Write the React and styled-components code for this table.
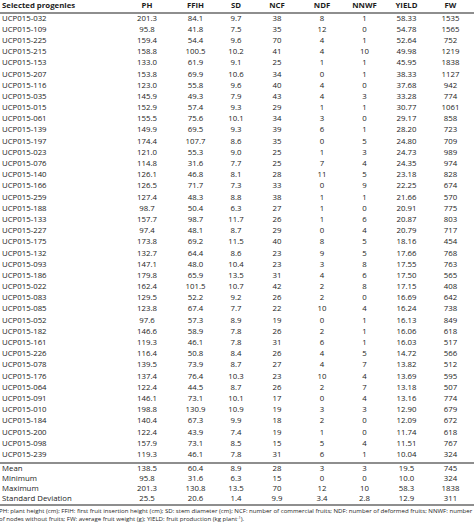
import React from "react";
import styled, { createGlobalStyle } from "styled-components";

const GlobalStyle = createGlobalStyle`
  html, body {
    margin: 0;
    padding: 0;
    background: #ffffff;
  }
  body {
    font-family: "Open Sans", "Noto Sans", sans-serif;
    color: #1c1c1c;
  }
`;

const cols = "122px 50px 47px 34px 48px 42px 43px 41px 47px";

const Sheet = styled.div`
  width: 474px;
  height: 525px;
  overflow: hidden;
  font-size: 7.8px;
`;

const Row = styled.div`
  display: grid;
  grid-template-columns: ${cols};
  align-items: center;
  box-sizing: border-box;
  height: ${(p) => p.$h}px;
  padding-bottom: ${(p) => p.$pb || 0}px;
  line-height: 7px;
  white-space: nowrap;
`;

const HeadRow = styled(Row)`
  font-weight: 700;
  border-bottom: 2px solid #8e8e8e;
`;

const StatBlock = styled.div`
  border-top: 2px solid #8e8e8e;
  border-bottom: 2px solid #8e8e8e;
`;

const Label = styled.div`
  padding-left: 2px;
`;

const Cell = styled.div`
  text-align: center;
`;

const Notes = styled.div`
  width: 474px;
  overflow: hidden;
  padding-top: 1px;
`;

const Note = styled.div`
  font-size: 6.1px;
  line-height: 8.5px;
  margin-left: -1px;
  white-space: nowrap;
  color: #262626;
`;

const Sup = styled.sup`
  font-size: 4px;
  line-height: 0;
  vertical-align: 2px;
`;

const headers = ["PH", "FFIH", "SD", "NCF", "NDF", "NNWF", "YIELD", "FW"];

const rows = [
  ["032", "201.3", "84.1", "9.7", "38", "8", "1", "58.33", "1535"],
  ["109", "95.8", "41.8", "7.5", "35", "12", "0", "54.78", "1565"],
  ["225", "159.4", "54.4", "9.6", "70", "4", "1", "52.64", "752"],
  ["215", "158.8", "100.5", "10.2", "41", "4", "10", "49.98", "1219"],
  ["153", "133.0", "61.9", "9.1", "25", "1", "1", "45.95", "1838"],
  ["207", "153.8", "69.9", "10.6", "34", "0", "1", "38.33", "1127"],
  ["116", "123.0", "55.8", "9.6", "40", "4", "0", "37.68", "942"],
  ["035", "145.9", "49.3", "7.9", "43", "4", "3", "33.28", "774"],
  ["015", "152.9", "57.4", "9.3", "29", "1", "1", "30.77", "1061"],
  ["061", "155.5", "75.6", "10.1", "34", "3", "0", "29.17", "858"],
  ["139", "149.9", "69.5", "9.3", "39", "6", "1", "28.20", "723"],
  ["197", "174.4", "107.7", "8.6", "35", "0", "5", "24.80", "709"],
  ["023", "121.0", "55.3", "9.0", "25", "1", "3", "24.73", "989"],
  ["076", "114.8", "31.6", "7.7", "25", "7", "4", "24.35", "974"],
  ["140", "126.1", "46.8", "8.1", "28", "11", "5", "23.18", "828"],
  ["166", "126.5", "71.7", "7.3", "33", "0", "9", "22.25", "674"],
  ["259", "127.4", "48.3", "8.8", "38", "1", "1", "21.66", "570"],
  ["188", "98.7", "50.4", "6.3", "27", "1", "0", "20.91", "775"],
  ["133", "157.7", "98.7", "11.7", "26", "1", "6", "20.87", "803"],
  ["227", "97.4", "48.1", "8.7", "29", "0", "4", "20.79", "717"],
  ["175", "173.8", "69.2", "11.5", "40", "8", "5", "18.16", "454"],
  ["132", "132.7", "64.4", "8.6", "23", "9", "5", "17.66", "768"],
  ["093", "147.1", "48.0", "10.4", "23", "3", "8", "17.55", "763"],
  ["186", "179.8", "65.9", "13.5", "31", "4", "6", "17.50", "565"],
  ["022", "162.4", "101.5", "10.7", "42", "2", "8", "17.15", "408"],
  ["083", "129.5", "52.2", "9.2", "26", "2", "0", "16.69", "642"],
  ["085", "123.8", "67.4", "7.7", "22", "10", "4", "16.24", "738"],
  ["052", "97.6", "57.3", "8.9", "19", "0", "1", "16.13", "849"],
  ["182", "146.6", "58.9", "7.8", "26", "2", "1", "16.06", "618"],
  ["161", "119.3", "46.1", "7.8", "31", "6", "1", "16.03", "517"],
  ["226", "116.4", "50.8", "8.4", "26", "4", "5", "14.72", "566"],
  ["078", "139.5", "73.9", "8.7", "27", "4", "7", "13.82", "512"],
  ["176", "137.4", "76.4", "10.3", "23", "10", "4", "13.69", "595"],
  ["064", "122.4", "44.5", "8.7", "26", "2", "7", "13.18", "507"],
  ["091", "146.1", "73.1", "10.1", "17", "0", "4", "13.16", "774"],
  ["010", "198.8", "130.9", "10.9", "19", "3", "3", "12.90", "679"],
  ["184", "140.4", "67.3", "9.9", "18", "2", "0", "12.09", "672"],
  ["200", "122.4", "43.9", "7.4", "19", "1", "0", "11.74", "618"],
  ["098", "157.9", "73.1", "8.5", "15", "5", "4", "11.51", "767"],
  ["239", "119.3", "46.1", "7.8", "31", "6", "1", "10.04", "324"],
];

const stats = [
  ["Mean", "138.5", "60.4", "8.9", "28", "3", "3", "19.5", "745"],
  ["Minimum", "95.8", "31.6", "6.3", "15", "0", "0", "10.0", "324"],
  ["Maximum", "201.3", "130.8", "13.5", "70", "12", "10", "58.3", "1838"],
  ["Standard Deviation", "25.5", "20.6", "1.4", "9.9", "3.4", "2.8", "12.9", "311"],
];

export default function App() {
  return (
    <>
      <GlobalStyle />
      <Sheet>
        <HeadRow $h={14} $pb={2}>
          <Label>Selected progenies</Label>
          {headers.map((h) => (
            <Cell key={h}>{h}</Cell>
          ))}
        </HeadRow>
        {rows.map(([id, ...vals]) => (
          <Row key={id} $h={11.2} $pb={3}>
            <Label>UCP015-{id}</Label>
            {vals.map((v, i) => (
              <Cell key={i}>{v}</Cell>
            ))}
          </Row>
        ))}
        <StatBlock>
          {stats.map(([name, ...vals]) => (
            <Row key={name} $h={10} $pb={1}>
              <Label>{name}</Label>
              {vals.map((v, i) => (
                <Cell key={i}>{v}</Cell>
              ))}
            </Row>
          ))}
        </StatBlock>
        <Notes>
          <Note>
            PH: plant height (cm); FFIH: first fruit insertion height (cm); SD: stem diameter (cm); NCF: number of commercial fruits; NDF: number of deformed fruits; NNWF: number
          </Note>
          <Note>
            of nodes without fruits; FW: average fruit weight (g); YIELD: fruit production (kg plant<Sup>-1</Sup>).
          </Note>
        </Notes>
      </Sheet>
    </>
  );
}
